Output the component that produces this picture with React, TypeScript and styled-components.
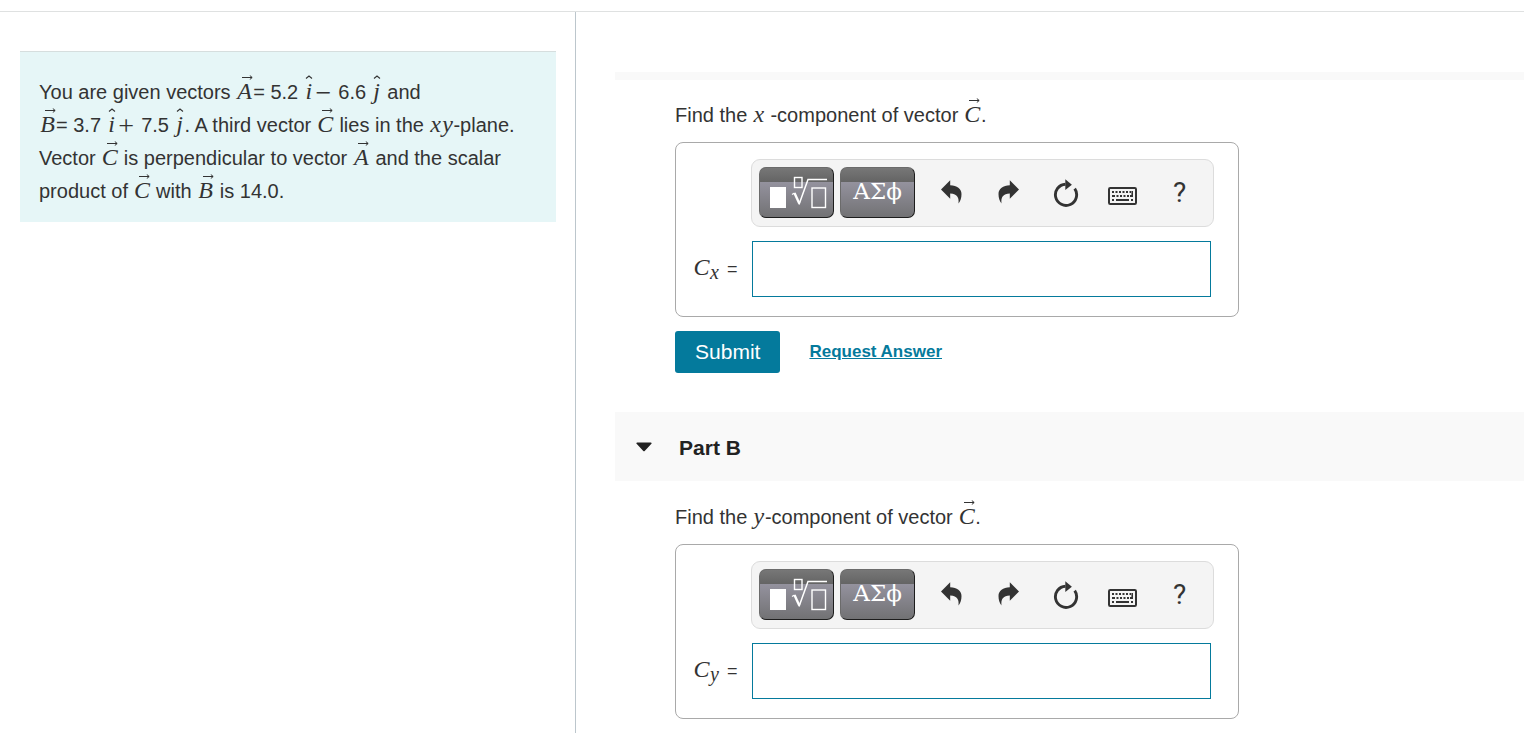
import React from "react";
import styled, { createGlobalStyle } from "styled-components";

const GlobalStyle = createGlobalStyle`
  *, *::before, *::after { box-sizing: border-box; }
  body {
    margin: 0;
    background: #fff;
    color: #333;
    font-family: "Liberation Sans", Arial, sans-serif;
    font-size: 20px;
    line-height: 33px;
  }
`;

const Page = styled.div`
  display: flex;
  flex-direction: column;
  min-height: 100vh;
`;

const TopBar = styled.header`
  height: 12px;
  border-bottom: 1px solid #dfe1e1;
`;

const Columns = styled.main`
  flex: 1;
  display: grid;
  grid-template-columns: minmax(320px, 37.8%) minmax(0, 1fr);
`;

const IntroColumn = styled.section`
  padding: 39px 19px 20px 20px;
  border-right: 1px solid #bcc6cc;
`;

const IntroCard = styled.p`
  margin: 0;
  padding: 24px 19px 14px;
  border-top: 1px solid #d6dede;
  background: #e6f6f7;
`;

const WorkColumn = styled.section`
  padding: 60px 0 12px 39px;
`;

const PartDivider = styled.div`
  height: 8px;
  background: #f9f9f9;
`;

const PartHeader = styled.h2`
  margin: 0 0 1px;
  background: #f9f9f9;
`;

const PartToggle = styled.button`
  display: flex;
  align-items: center;
  gap: 27px;
  width: 100%;
  height: 69px;
  padding: 1px 21px 0;
  border: 0;
  background: none;
  color: #222;
  font: bold 21px/33px "Liberation Sans", Arial, sans-serif;
  text-align: left;
`;

const PartBody = styled.form`
  margin: 0;
  padding: 19px 20px 0 60px;
`;

const Question = styled.p`
  margin: 0 0 10px;
`;

const AnswerBox = styled.div`
  display: grid;
  grid-template-columns: 58px minmax(0, 1fr);
  row-gap: 14px;
  max-width: 564px;
  padding: 16px 24px 19px 17px;
  border: 1px solid #a9a9a9;
  border-radius: 8px;
`;

const Toolbar = styled.div`
  grid-column: 2;
  display: flex;
  align-items: flex-start;
  gap: 6px;
  height: 68px;
  padding: 7px;
  border: 1px solid #dcdcdc;
  border-radius: 9px;
  background: #f4f4f4;
`;

const PaletteButton = styled.button`
  display: flex;
  align-items: center;
  justify-content: center;
  flex: none;
  width: 75px;
  height: 51px;
  padding: 0;
  border: 1px solid #6b6b6b;
  border-right: 1px solid #1d1d1d;
  border-bottom: 1px solid #1d1d1d;
  border-radius: 7px;
  background: linear-gradient(#777 0, #646464 14px, #94929e 14px, #727274 100%);
  color: #fff;
  font: 23px/47px "DejaVu Serif", serif;
`;

const PaletteText = styled.span`
  padding-bottom: 2px;
`;

const ToolGroup = styled.div`
  display: flex;
  padding-left: 2px;
`;

const ToolButton = styled.button`
  display: flex;
  align-items: center;
  justify-content: center;
  width: 57px;
  height: 51px;
  padding: 1px 0 0;
  border: 0;
  background: none;
  color: #333;
  font: 28px/50px Roboto, "Liberation Sans", sans-serif;
`;

const AnswerLabel = styled.label`
  display: flex;
  align-items: center;
  gap: 8px;
  padding-right: 13px;
  font-size: 18px;
  white-space: nowrap;
`;

const AnswerInput = styled.input`
  width: calc(100% - 4px);
  height: 56px;
  margin: 0 3px 0 1px;
  padding: 0 10px;
  border: 1px solid #047a9c;
  border-radius: 0;
  outline: none;
  background: #fff;
  color: #333;
  font: 24px "Liberation Serif", serif;
`;

const Actions = styled.div`
  display: flex;
  align-items: center;
  gap: 29px;
  padding: 14px 0 39px;
`;

const SubmitButton = styled.button`
  height: 42px;
  padding: 0 20px;
  border: 0;
  border-radius: 3px;
  background: #047a9c;
  color: #fff;
  font: 21px/42px "Liberation Sans", Arial, sans-serif;
`;

const RequestLink = styled.a`
  padding-bottom: 2px;
  color: #047a9c;
  font-size: 17px;
  font-weight: bold;
  line-height: 21px;
  text-decoration: underline;
`;

const NoWrap = styled.span`
  white-space: nowrap;
`;

const Letter = styled.i<{ $w: number }>`
  position: relative;
  display: inline-block;
  width: ${(p) => p.$w}px;
  font-family: "Liberation Serif", serif;
  font-size: 24px;
  line-height: 24px;
  text-align: center;
`;

const Operator = styled.span`
  display: inline-block;
  width: 19px;
  font-family: "Liberation Serif", serif;
  font-size: 28px;
  line-height: 24px;
  text-align: center;
  vertical-align: -3px;
`;

const Accent = styled.svg<{ $shift: number }>`
  position: absolute;
  top: -4px;
  left: calc(50% - ${(p) => p.$shift}px);
`;

const Subscript = styled.i`
  display: inline-block;
  font-family: "Liberation Serif", serif;
  font-size: 20px;
  line-height: 20px;
  vertical-align: -4px;
`;

const Vec = ({ children }: { children: string }) => (
  <Letter $w={17}>
    {children}
    <Accent $shift={3} width="11" height="5" viewBox="0 0 11 5" aria-hidden="true">
      <path d="M0 2.5h10M7.8.5l2.4 2-2.4 2" fill="none" stroke="#333" />
    </Accent>
  </Letter>
);

const Hat = ({ children }: { children: string }) => (
  <Letter $w={10}>
    {children}
    <Accent $shift={4} width="8" height="4" viewBox="0 0 8 4" aria-hidden="true">
      <path d="M1 3.5L4 1l3 2.5" fill="none" stroke="#333" strokeWidth="1.1" />
    </Accent>
  </Letter>
);

const CaretIcon = () => (
  <svg width="16" height="10" viewBox="0 0 16 10" aria-hidden="true">
    <path d="M1.2.5h13.6c.8 0 1.1.8.6 1.3L8.7 8.9c-.4.4-1 .4-1.4 0L.6 1.8C.1 1.3.4.5 1.2.5z" fill="#222" />
  </svg>
);

const RootIcon = () => (
  <svg width="60" height="34" viewBox="0 0 60 34" aria-hidden="true">
    <rect x="3" y="11" width="16" height="21" fill="#fff" />
    <rect x="27.5" y="1.5" width="7.5" height="10" fill="none" stroke="#fff" strokeWidth="1.4" />
    <path d="M25 18.5l2.5-1.5" fill="none" stroke="#fff" strokeWidth="1.2" />
    <path d="M27.5 17l4.8 10.5" fill="none" stroke="#fff" strokeWidth="2.4" />
    <path d="M32 28.5L41 3.5h19" fill="none" stroke="#fff" strokeWidth="1.5" />
    <rect x="45" y="12" width="13.5" height="19.5" fill="none" stroke="#fff" strokeWidth="1.4" />
  </svg>
);

const UndoIcon = ({ flipped = false }: { flipped?: boolean }) => (
  <svg width="21" height="26" viewBox="0 0 21 26" aria-hidden="true">
    <path
      transform={flipped ? "translate(21 0) scale(-1 1)" : undefined}
      d="M0 9.5L9.2.3v5C16 5.3 20.5 8.8 20.5 14c0 4-1 7-3 9.5.6-5-.6-9.9-8.3-10v5.3z"
      fill="#333"
    />
  </svg>
);

const ResetIcon = () => (
  <svg width="26" height="29" viewBox="0 0 26 29" aria-hidden="true">
    <path d="M12.5 5.2a10.6 10.6 0 1 0 9.2 4.5" fill="none" stroke="#333" strokeWidth="2.9" />
    <path d="M12.3.3l6.6 5.4-6.6 5.2z" fill="#333" />
  </svg>
);

const KeyboardIcon = () => (
  <svg width="29" height="24" viewBox="0 -6 29 24" aria-hidden="true">
    <rect x="1" y="1" width="27" height="16" rx="1.2" fill="none" stroke="#333" strokeWidth="2" />
    <path
      d="M4 5h2M7.5 5h2M11 5h2M14.5 5h2M18 5h2M21.5 5h1.5M4 9h3M8.5 9h2M12 9h2M15.5 9h2M19 9h2M22 9h3M4 13h2M8 13h13M23 13h2"
      stroke="#333"
      strokeWidth="2"
    />
    <path d="M24.2 4v5" stroke="#333" strokeWidth="1.6" />
  </svg>
);

const AnswerForm = ({ axis }: { axis: string }) => (
  <AnswerBox>
    <Toolbar role="toolbar" aria-label="Equation editor">
      <PaletteButton type="button" aria-label="Templates">
        <RootIcon />
      </PaletteButton>
      <PaletteButton type="button">
        <PaletteText>ΑΣϕ</PaletteText>
      </PaletteButton>
      <ToolGroup>
        <ToolButton type="button" aria-label="Undo">
          <UndoIcon />
        </ToolButton>
        <ToolButton type="button" aria-label="Redo">
          <UndoIcon flipped />
        </ToolButton>
        <ToolButton type="button" aria-label="Reset">
          <ResetIcon />
        </ToolButton>
        <ToolButton type="button" aria-label="Keyboard shortcuts">
          <KeyboardIcon />
        </ToolButton>
        <ToolButton type="button">?</ToolButton>
      </ToolGroup>
    </Toolbar>
    <AnswerLabel htmlFor={`answer-${axis}`}>
      <span>
        <Letter $w={17}>C</Letter>
        <Subscript>{axis}</Subscript>
      </span>
      <span>=</span>
    </AnswerLabel>
    <AnswerInput id={`answer-${axis}`} type="text" autoComplete="off" />
  </AnswerBox>
);

export default function App() {
  return (
    <Page>
      <GlobalStyle />
      <TopBar />
      <Columns>
        <IntroColumn>
          <IntroCard>
            You are given vectors <Vec>A</Vec>= 5.2 <Hat>i</Hat>
            <Operator>−</Operator> 6.6 <Hat>j</Hat> and{" "}
            <NoWrap>
              <Vec>B</Vec>= 3.7 <Hat>i</Hat>
              <Operator>+</Operator> 7.5 <Hat>j</Hat>.
            </NoWrap>{" "}
            A third vector <Vec>C</Vec> lies in the{" "}
            <NoWrap>
              <Letter $w={12}>x</Letter>
              <Letter $w={12}>y</Letter>-plane.
            </NoWrap>{" "}
            Vector <Vec>C</Vec> is perpendicular to vector <Vec>A</Vec> and the scalar product of <Vec>C</Vec> with{" "}
            <Vec>B</Vec> is 14.0.
          </IntroCard>
        </IntroColumn>
        <WorkColumn>
          <PartDivider />
          <PartBody>
            <Question>
              Find the <Letter $w={12}>x</Letter> -component of vector <Vec>C</Vec>.
            </Question>
            <AnswerForm axis="x" />
            <Actions>
              <SubmitButton type="button">Submit</SubmitButton>
              <RequestLink href="#answer">Request Answer</RequestLink>
            </Actions>
          </PartBody>
          <PartHeader>
            <PartToggle type="button" aria-expanded="true">
              <CaretIcon />
              Part B
            </PartToggle>
          </PartHeader>
          <PartBody>
            <Question>
              Find the <Letter $w={12}>y</Letter>-component of vector <Vec>C</Vec>.
            </Question>
            <AnswerForm axis="y" />
          </PartBody>
        </WorkColumn>
      </Columns>
    </Page>
  );
}
